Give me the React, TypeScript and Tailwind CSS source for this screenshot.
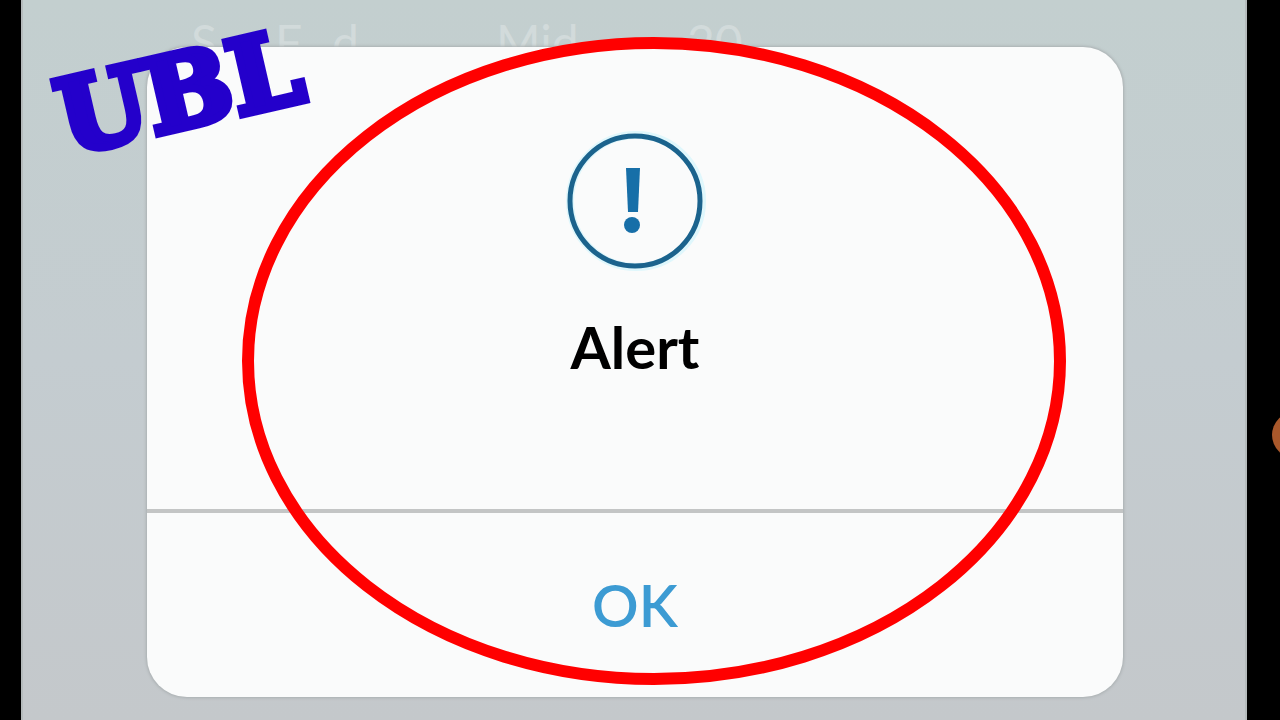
import React from "react"

function AlertIcon() {
    return (
        <svg viewBox="0 0 136 136" className="size-[136px] overflow-visible" aria-hidden="true">
            <circle cx="69" cy="68" r="66" fill="none" stroke="#c4f3fd" strokeWidth="8" opacity="0.5" />
            <circle cx="68" cy="68" r="65" fill="none" stroke="#1b638d" strokeWidth="5" />
            <path d="M59 35h14l-2 44H61z" fill="#176fa8" />
            <circle cx="65" cy="92" r="8" fill="#176fa8" />
        </svg>
    )
}

function Dialog() {
    return (
        <section
            role="alertdialog"
            aria-labelledby="alert-title"
            className="relative flex flex-1 flex-col overflow-hidden rounded-[40px] bg-[#fafbfb] shadow-[0_0_3px_1px_#a9afb1]"
        >
            <div className="flex flex-1 flex-col items-center pt-[86px]">
                <AlertIcon />
                <h1 id="alert-title" className="mt-[46px] text-[58px] leading-[64px] font-bold text-black">
                    Alert
                </h1>
            </div>
            <button
                type="button"
                className="h-[188px] border-t-4 border-[#c3c5c5] text-[58px] leading-[64px] font-semibold text-[#3c9bd3]"
            >
                OK
            </button>
        </section>
    )
}

// line of the screen underneath, mostly covered by the dialog
function CoveredLine() {
    return (
        <div
            aria-hidden="true"
            className="absolute top-[14px] left-[168px] grid grid-cols-[84px_57px_164px_191px_auto] text-[48px] leading-[56px] text-white/25"
        >
            <span>S</span>
            <span>F</span>
            <span>d</span>
            <span>Mid</span>
            <span>20</span>
        </div>
    )
}

export default function App() {
    return (
        <main className="relative flex h-screen overflow-hidden bg-black pr-[33px] pl-[21px] font-['Lato',sans-serif]">
            <div className="relative flex flex-1 flex-col border-x-2 border-[#b5bbbc] bg-linear-to-b from-[#c3cfcf] via-[#c4ccd0] to-[#c4c8cb] pt-[47px] pr-[122px] pb-[23px] pl-[124px]">
                <CoveredLine />
                <Dialog />
            </div>

            <span className="absolute top-[412px] -right-[38px] size-[46px] rounded-full bg-[#a9582b]" />

            <svg
                viewBox="0 0 1280 720"
                preserveAspectRatio="none"
                className="pointer-events-none absolute inset-0 size-full"
                aria-hidden="true"
            >
                <ellipse cx="654" cy="361" rx="406" ry="318" fill="none" stroke="#ff0000" strokeWidth="12" />
            </svg>

            <p className="absolute top-[32px] left-[56px] -rotate-13 font-['DejaVu_Serif',serif] text-[102px] leading-[120px] font-bold text-[#2400cb] [-webkit-text-stroke:8px_#2400cb]">
                UBL
            </p>
        </main>
    )
}
